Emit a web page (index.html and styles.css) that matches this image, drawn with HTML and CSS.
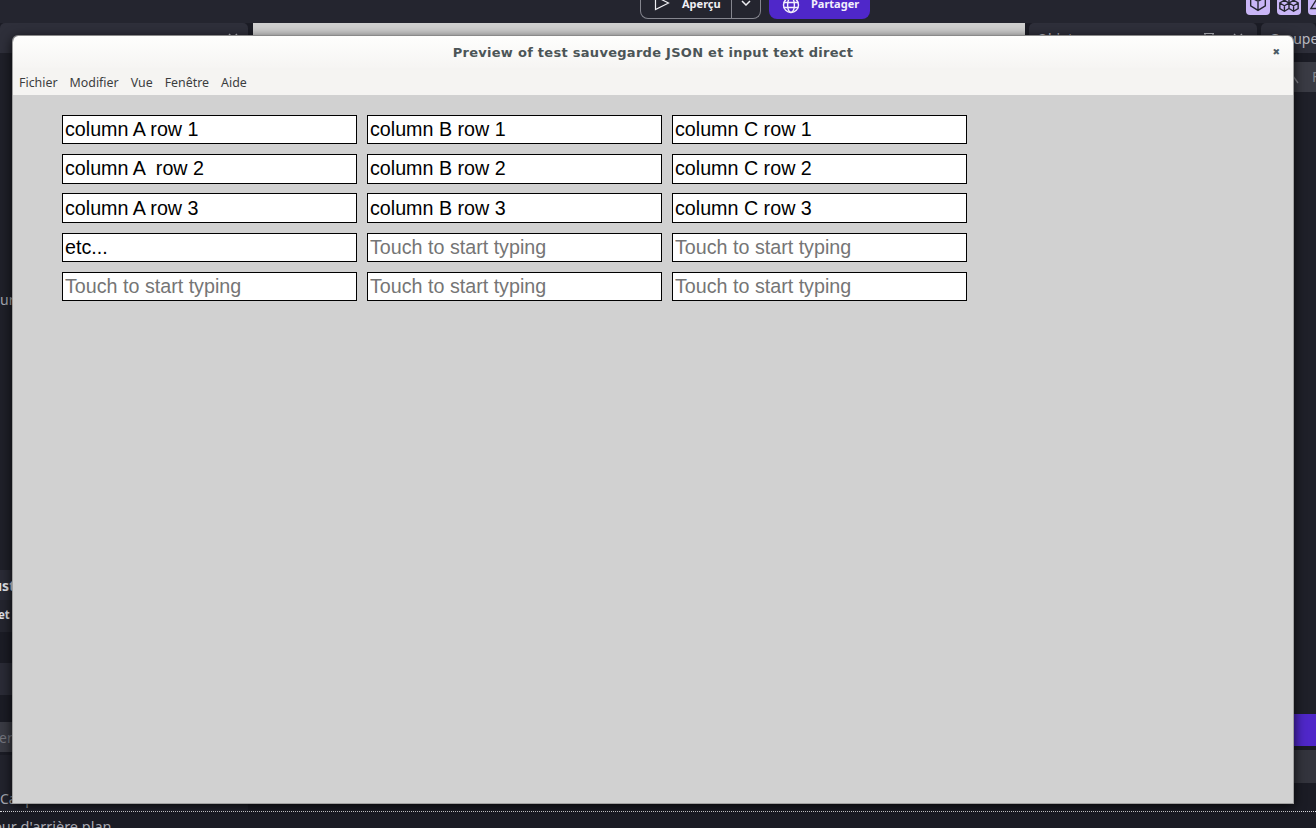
FILE: index.html
```html
<!DOCTYPE html>
<html lang="fr">
<head>
<meta charset="utf-8">
<title>Preview of test sauvegarde JSON et input text direct</title>
<link rel="stylesheet" href="styles.css">
</head>
<body>
<div class="editor">
  <header class="topbar">
    <div class="preview-group">
      <button class="preview-main">
        <svg class="play" viewBox="0 0 16 16" width="16" height="16"><path d="M1.500 1.500 14.500 8 1.500 14.500Z"/></svg>
        <span>Aperçu</span>
      </button>
      <button class="preview-more">
        <svg viewBox="0 0 10 6" width="10" height="6"><path d="M1 1 5 5 9 1"/></svg>
      </button>
    </div>
    <button class="share">
      <svg viewBox="0 0 18 18" width="18" height="18"><circle cx="9" cy="9" r="7.500"/><ellipse cx="9" cy="9" rx="3.400" ry="7.500"/><path d="M1.500 6.500h15M1.500 11.500h15"/></svg>
      <span>Partager</span>
    </button>
    <div class="tools">
      <span class="tool"><svg viewBox="0 0 24 24"><path d="M12 2 20 6V15L12 20 4 15V6ZM4 6 12 10 20 6M12 10V20"/></svg></span>
      <span class="tool"><svg viewBox="0 0 24 24"><path d="M12 1 17 4V9L12 12 7 9V4ZM7 9 2 12V18L7 21 12 18 17 21 22 18V12L17 9M12 12V18M2 12 7 15 12 12 17 15 22 12M7 15V21M17 15V21M7 4 12 6.500 17 4M12 6.500V12"/></svg></span>
      <span class="tool"><svg viewBox="0 0 24 24"><path d="M2 18 12 2 22 18Z"/></svg></span>
    </div>
  </header>
  <main class="workspace">
    <aside class="panel left">
      <div class="panel-head head-end"><svg class="chev" viewBox="0 0 10 6" width="10" height="6"><path d="M1 1 5 5 9 1"/></svg></div>
      <div class="left-a"><span class="frag">ur</span></div>
      <div class="left-b"><span class="frag strong">ust</span></div>
      <div class="left-c"><span class="frag small">et</span></div>
      <div class="left-d"></div>
      <div class="left-e"><span class="frag dim">erc</span></div>
      <div class="left-f"><span class="layer">Calque de base</span></div>
    </aside>
    <section class="canvas"></section>
    <aside class="panel objects">
      <div class="panel-head head-objects">
        <span class="head-title">Objets</span>
        <svg class="filter" viewBox="0 0 10 8" width="10" height="8"><path d="M0 .5h10M1 .5V8M9 .5V8"/></svg>
        <svg class="chev" viewBox="0 0 10 6" width="10" height="6"><path d="M1 1 5 5 9 1"/></svg>
      </div>
    </aside>
    <aside class="panel groups">
      <div class="panel-head"><span class="head-title">Groupes</span></div>
      <div class="search">
        <svg class="lens" viewBox="0 0 6 8" width="6" height="8"><path d="M0 0 5 7"/></svg>
        <span>F</span>
      </div>
      <div class="groups-fill"></div>
      <div class="add-band"></div>
      <div class="groups-gap"></div>
      <div class="groups-input"></div>
    </aside>
  </main>
  <footer class="foot"><span>Couleur d'arrière plan</span></footer>
</div>

<div class="window">
  <div class="titlebar">
    <span class="win-title">Preview of test sauvegarde JSON et input text direct</span>
    <span class="win-close">✖</span>
  </div>
  <nav class="menubar">
    <span>Fichier</span><span>Modifier</span><span>Vue</span><span>Fenêtre</span><span>Aide</span>
  </nav>
  <div class="game">
    <div class="cells">
      <input class="cell" value="column A row 1" placeholder="Touch to start typing">
      <input class="cell" value="column B row 1" placeholder="Touch to start typing">
      <input class="cell" value="column C row 1" placeholder="Touch to start typing">
      <input class="cell" value="column A  row 2" placeholder="Touch to start typing">
      <input class="cell" value="column B row 2" placeholder="Touch to start typing">
      <input class="cell" value="column C row 2" placeholder="Touch to start typing">
      <input class="cell" value="column A row 3" placeholder="Touch to start typing">
      <input class="cell" value="column B row 3" placeholder="Touch to start typing">
      <input class="cell" value="column C row 3" placeholder="Touch to start typing">
      <input class="cell" value="etc..." placeholder="Touch to start typing">
      <input class="cell" placeholder="Touch to start typing">
      <input class="cell" placeholder="Touch to start typing">
      <input class="cell" placeholder="Touch to start typing">
      <input class="cell" placeholder="Touch to start typing">
      <input class="cell" placeholder="Touch to start typing">
    </div>
  </div>
</div>
</body>
</html>
```
FILE: styles.css
```css
* { box-sizing: border-box; }
html, body { margin: 0; height: 100%; overflow: hidden; background: #1b1c25; }
body { font-family: "Noto Sans", sans-serif; }

.editor { width: 1316px; height: 828px; display: flex; flex-direction: column; overflow: hidden; background: #1b1c25; }

.topbar { height: 23px; flex: none; display: flex; background: #24252f; position: relative; padding-left: 640px; gap: 8px; }
.preview-group { width: 121px; height: 19px; display: flex; border: 1px solid #85868f; border-top: 0; border-radius: 0 0 8px 8px; }
.preview-main, .preview-more { background: none; border: 0; padding: 0; display: flex; align-items: center; color: #f0f0f5; }
.preview-main { width: 91px; gap: 12px; padding: 0 0 12px 13px; border-right: 1px solid #85868f; font: 700 11px "Noto Sans", sans-serif; }
.preview-more { flex: 1; justify-content: center; padding-bottom: 13px; }
.play { flex: none; }
.play path { fill: none; stroke: #eeeef2; stroke-width: 1.2; }
.preview-more path { fill: none; stroke: #eeeef2; stroke-width: 1.5; }
.share { width: 101px; height: 19px; border: 0; border-radius: 0 0 8px 8px; background: #4f27c9; color: #f2effc; display: flex; align-items: center; gap: 11px; padding: 0 0 12px 13px; font: 700 11px "Noto Sans", sans-serif; }
.share svg { flex: none; fill: none; stroke: #f2effc; stroke-width: 1.4; margin-top: 2px; }
.tools { position: absolute; top: -9px; left: 1246px; display: flex; gap: 7px; }
.tool { width: 24px; height: 24px; border-radius: 4px; background: #c9b6f6; display: flex; align-items: center; justify-content: center; flex: none; }
.tool svg { width: 22px; height: 22px; fill: none; stroke: #24252f; stroke-width: 1.5; }

.workspace { flex: 1; display: flex; gap: 4px; min-height: 0; }
.panel { background: #1b1c25; display: flex; flex-direction: column; flex: none; overflow: hidden; }
.panel-head { height: 30px; flex: none; background: #2e2f3a; border-radius: 5px 5px 0 0; color: #b9bac2; font-size: 14px; padding: 7px 0 0 8px; line-height: 18px; display: flex; }
.head-title { white-space: nowrap; }
.head-end { justify-content: flex-end; padding-right: 10px; }
.head-objects { padding-right: 14px; }
.chev { fill: none; stroke: #b9bac2; stroke-width: 1.4; margin-top: 3px; flex: none; }
.filter { fill: none; stroke: #b9bac2; stroke-width: 1; margin: 3px 0 0 auto; flex: none; }
.head-objects .chev { margin-left: 19px; }

.left { width: 248px; color: #c9cad0; }
.left-a { height: 517px; flex: none; padding-top: 238px; background: #1f2029; }
.left-b { height: 30px; flex: none; background: #2a2b36; }
.left-c { height: 32px; flex: none; background: #24252f; margin-bottom: 31px; }
.left-d { height: 32px; flex: none; background: #2a2b36; margin-bottom: 27px; }
.left-e { height: 30px; flex: none; background: #3a3b44; margin-bottom: 3px; }
.left-f { flex: 1; background: #22232d; }
.frag { display: block; margin-left: 0; font-size: 14px; line-height: 18px; color: #a9aab2; }
.strong { font-weight: 700; color: #e6e6ea; margin-left: -7px; padding-top: 7px; }
.small { font-size: 11.500px; font-weight: 700; color: #e6e6ea; margin-left: -2px; padding-top: 6px; }
.dim { color: #75767e; margin-left: -1px; padding-top: 7px; }
.layer { display: block; margin: 35px 0 0; font-size: 14px; line-height: 18px; color: #a9aab2; white-space: nowrap; }

.canvas { width: 772px; flex: none; margin: 0 0 8px 1px; background: #d0d0d0; }
.objects { width: 228px; }
.groups { flex: 1; }
.search { height: 30px; margin-top: 9px; background: #3a3b44; color: #85868d; padding: 5px 0 0 32px; font-size: 14px; flex: none; display: flex; gap: 13px; }
.lens { fill: none; stroke: #85868d; stroke-width: 1.4; margin-top: 9px; flex: none; }
.groups-fill { flex: 1; background: #1f2029; }
.add-band { height: 32px; flex: none; background: #4f27c9; }
.groups-gap { height: 4px; flex: none; }
.groups-input { height: 33px; flex: none; background: #33343d; margin-bottom: 28px; }

.foot { height: 17px; flex: none; background: #1b1c25; border-top: 1px dotted #d9d9de; color: #a9aab2; font-size: 14.500px; line-height: 18px; padding: 5px 0 0; white-space: nowrap; }
.foot span { display: block; margin-left: -37px; }

.window { position: absolute; left: 12px; top: 36px; width: 1282px; height: 768px; display: flex; flex-direction: column; border: 1px solid #a0a0a0; border-top: 0; border-radius: 6px 6px 0 0; overflow: hidden; box-shadow: 0 -1px 0 #8a8a8a, 0 2px 12px rgba(0,0,0,.8); }
.titlebar { height: 32px; flex: none; display: flex; align-items: center; justify-content: center; position: relative; padding-top: 1px; background: linear-gradient(#fefefd, #f6f5f3); }
.win-title { font: 700 13px "DejaVu Sans", sans-serif; color: #4c5557; letter-spacing: 0.28px; }
.win-close { position: absolute; right: 13px; top: 10px; font: 9px/12px "DejaVu Sans", sans-serif; color: #4c5b66; }
.menubar { height: 27px; flex: none; display: flex; gap: 12px; padding: 6px 0 0 6px; background: #f5f4f2; font-size: 12.400px; line-height: 18px; color: #3b3d3e; }
.game { flex: 1; background: #d1d1d1; padding: 19.700px 0 0 49px; }
.cells { display: grid; grid-template-columns: repeat(3, 295px); grid-auto-rows: 29.600px; gap: 9.700px 10px; }
.cell { width: 100%; height: 100%; min-width: 0; border: 1px solid #000; border-radius: 0; outline: 0; padding: 0 2px; margin: 0; background: #fff; color: #000; font: 19.700px "Liberation Sans", sans-serif; }
.cell::placeholder { color: #757575; opacity: 1; }
```
